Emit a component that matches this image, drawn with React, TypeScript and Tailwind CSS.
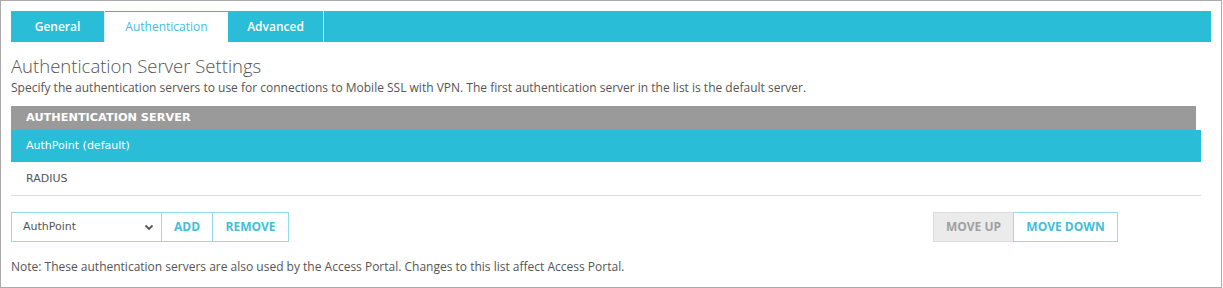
const openSans = "font-['Open_Sans',sans-serif]";

export default function App() {
  return (
    <div className={`w-[1222px] h-[288px] border border-[#aaaaaa] bg-white px-[10px] pt-[10px] text-[#555555] ${openSans}`}>
      {/* tabs */}
      <div className="flex h-[31px] w-[1200px] bg-[#2abdd8]">
        <div className="flex w-[94px] items-center justify-center border-r border-white/80 text-[12px] font-semibold text-white">
          General
        </div>
        <div className="flex w-[123px] items-center justify-center border-t border-[#2abdd8] bg-white text-[12px] text-[#45c0da]">
          Authentication
        </div>
        <div className="flex w-[96px] items-center justify-center border-r border-white/80 text-[12px] font-semibold text-white">
          Advanced
        </div>
      </div>

      <h2 className="mt-[12px] text-[18.5px] font-light leading-[24px] text-[#555555]">Authentication Server Settings</h2>
      <p className="mt-[2px] text-[12px] leading-[16px]">
        Specify the authentication servers to use for connections to Mobile SSL with VPN. The first authentication server in
        the list is the default server.
      </p>

      {/* server list */}
      <div className="mt-[10px] w-[1190px] font-['DejaVu_Sans',sans-serif]">
        <div className="flex h-[24px] w-[1185px] items-center bg-[#9a9a9a] pl-[15px] text-[11.3px] font-bold text-white">
          AUTHENTICATION SERVER
        </div>
        <div className="flex h-[32px] items-center bg-[#2abdd8] pl-[15px] pt-px text-[11px] text-white">
          AuthPoint (default)
        </div>
        <div className="flex h-[34px] items-center border-b border-[#dddddd] pl-[15px] pt-[2px] text-[11px] text-[#555555]">
          RADIUS
        </div>
      </div>

      {/* controls */}
      <div className="mt-[16px] flex h-[30px] w-[1200px] items-stretch">
        <div className="flex w-[151px] items-center justify-between border border-[#93dce9] pl-[11px] pr-[6px] font-['DejaVu_Sans',sans-serif] text-[11px] text-[#555555]">
          <span>AuthPoint</span>
          <svg width="12" height="12" viewBox="0 0 12 12" fill="none">
            <path d="M2.5 4.5 6 8l3.5-3.5" stroke="#555555" strokeWidth="1.8" />
          </svg>
        </div>
        <button className="-ml-px w-[52px] border border-[#93dce9] text-[12px] font-bold text-[#3fbfd9]">ADD</button>
        <button className="-ml-px w-[77px] border border-[#93dce9] text-[12px] font-bold text-[#3fbfd9]">REMOVE</button>
        <div className="flex-1" />
        <button className="w-[81px] border border-[#dddddd] bg-[#ebebeb] text-[12px] font-bold text-[#a0a0a0]">MOVE UP</button>
        <button className="-ml-px w-[105px] border border-[#93dce9] text-[12px] font-bold text-[#3fbfd9]">MOVE DOWN</button>
        <div className="w-[93px]" />
      </div>

      <p className="mt-[17px] text-[12px] leading-[16px]">
        Note: These authentication servers are also used by the Access Portal. Changes to this list affect Access Portal.
      </p>
    </div>
  );
}
